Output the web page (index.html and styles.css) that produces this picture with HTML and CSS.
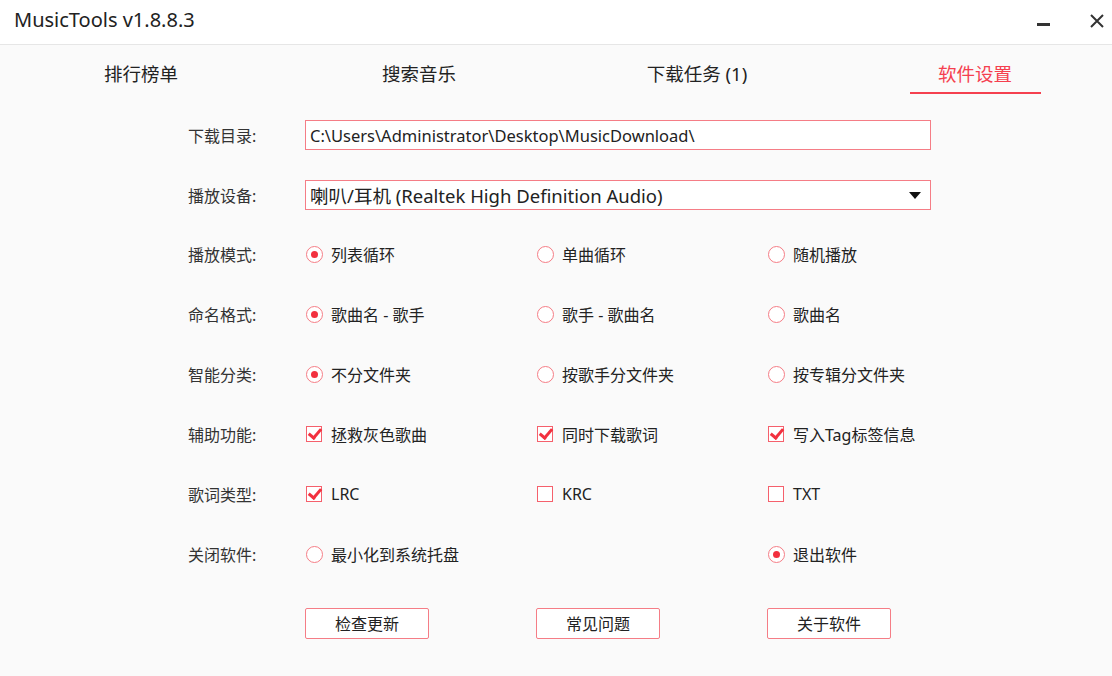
FILE: index.html
```html
<!DOCTYPE html>
<html lang="zh-CN">
<head>
  <meta charset="UTF-8" />
  <title>MusicTools v1.8.8.3</title>
  <link rel="stylesheet" href="styles.css">
</head>
<body>
  <!-- 标题栏 -->
  <div class="titlebar">
    <span class="app-title">MusicTools v1.8.8.3</span>
    <div class="win-btns">
      <span class="win-btn min"></span>
      <span class="win-btn close">
        <svg width="14" height="14" viewBox="0 0 14 14"><path d="M1 1L13 13M13 1L1 13" stroke="#333" stroke-width="2"/></svg>
      </span>
    </div>
  </div>

  <!-- 标签页 -->
  <div class="tabs">
    <div class="tab">排行榜单</div>
    <div class="tab">搜索音乐</div>
    <div class="tab">下载任务 (1)</div>
    <div class="tab active">软件设置</div>
  </div>

  <!-- 设置表单 -->
  <div class="form">
    <div class="row">
      <div class="label">下载目录:</div>
      <div class="field"><div class="input">C:\Users\Administrator\Desktop\MusicDownload\</div></div>
    </div>
    <div class="row">
      <div class="label">播放设备:</div>
      <div class="field">
        <div class="input select">喇叭/耳机 (Realtek High Definition Audio)<span class="arrow"></span></div>
      </div>
    </div>
    <div class="row">
      <div class="label">播放模式:</div>
      <div class="opts">
        <div class="opt"><span class="radio on"></span>列表循环</div>
        <div class="opt"><span class="radio"></span>单曲循环</div>
        <div class="opt"><span class="radio"></span>随机播放</div>
      </div>
    </div>
    <div class="row">
      <div class="label">命名格式:</div>
      <div class="opts">
        <div class="opt"><span class="radio on"></span>歌曲名 - 歌手</div>
        <div class="opt"><span class="radio"></span>歌手 - 歌曲名</div>
        <div class="opt"><span class="radio"></span>歌曲名</div>
      </div>
    </div>
    <div class="row">
      <div class="label">智能分类:</div>
      <div class="opts">
        <div class="opt"><span class="radio on"></span>不分文件夹</div>
        <div class="opt"><span class="radio"></span>按歌手分文件夹</div>
        <div class="opt"><span class="radio"></span>按专辑分文件夹</div>
      </div>
    </div>
    <div class="row">
      <div class="label">辅助功能:</div>
      <div class="opts">
        <div class="opt"><span class="check on"></span>拯救灰色歌曲</div>
        <div class="opt"><span class="check on"></span>同时下载歌词</div>
        <div class="opt"><span class="check on"></span>写入Tag标签信息</div>
      </div>
    </div>
    <div class="row">
      <div class="label">歌词类型:</div>
      <div class="opts">
        <div class="opt"><span class="check on"></span>LRC</div>
        <div class="opt"><span class="check"></span>KRC</div>
        <div class="opt"><span class="check"></span>TXT</div>
      </div>
    </div>
    <div class="row">
      <div class="label">关闭软件:</div>
      <div class="opts">
        <div class="opt"><span class="radio"></span>最小化到系统托盘</div>
        <div class="opt"></div>
        <div class="opt"><span class="radio on"></span>退出软件</div>
      </div>
    </div>
    <div class="row btn-row">
      <div class="label"></div>
      <div class="opts">
        <div class="opt"><button class="btn">检查更新</button></div>
        <div class="opt"><button class="btn">常见问题</button></div>
        <div class="opt"><button class="btn">关于软件</button></div>
      </div>
    </div>
  </div>
</body>
</html>
```

FILE: styles.css
```css
*{margin:0;padding:0;box-sizing:border-box}

body{
  width:1112px;height:676px;overflow:hidden;
  background:#fafafa;color:#333;
  font-family:"Noto Sans","Noto Sans CJK SC",sans-serif;
  font-size:16px
}

/* === 标题栏 === */
.titlebar{
  height:45px;background:#fff;border-bottom:1px solid #e6e6e6;
  display:flex;align-items:center;justify-content:space-between;
  padding-left:14px
}
.app-title{font-size:20px;color:#222;margin-top:-6px}
.win-btns{display:flex;align-items:center;height:100%;padding-right:8px}
.win-btn{display:flex;align-items:center;justify-content:center}
.win-btn.min{width:13px;height:3px;background:#333;margin-top:5px;margin-right:40px}
.win-btn.close{width:14px;height:14px;margin-top:-2px}

/* === 标签页 === */
.tabs{display:grid;grid-template-columns:repeat(4,1fr);height:50px}
.tab{
  display:flex;justify-content:center;align-items:center;
  font-size:18.5px;color:#222;position:relative;padding-top:5px;padding-left:4px
}
.tab.active{color:#f5404f}
.tab.active::after{
  content:"";position:absolute;bottom:1px;left:50%;
  width:131px;margin-left:-63px;height:2px;background:#f5404f
}

/* === 表单 === */
.form{padding:10px 0 0 188px}
.row{display:flex;align-items:center;height:60px}
.row:nth-child(2){height:59px}
.label{width:117px;color:#333}
.field{width:626px}
.input{
  height:30px;border:1px solid #f57d86;background:#fff;
  display:flex;align-items:center;padding-left:4px;
  font-size:16.5px;color:#222;position:relative
}
.input.select{font-size:18.5px}
.select .arrow{
  position:absolute;right:9px;top:11px;
  border-left:6px solid transparent;border-right:6px solid transparent;border-top:7px solid #111
}

.opts{display:flex}
.opt{width:231px;display:flex;align-items:center;color:#222;padding-left:1px}

.radio{
  width:17px;height:17px;border-radius:50%;border:1.5px solid #f57d86;
  margin-right:8px;display:flex;align-items:center;justify-content:center;background:#fff
}
.radio.on::after{content:"";width:7px;height:7px;border-radius:50%;background:#f2313f}

.check{
  width:16px;height:16px;border:1.5px solid #f5606c;margin-right:9px;
  background:#fff;position:relative
}
.check.on::after{
  content:"";position:absolute;left:4px;top:-1px;width:5px;height:10px;
  border-right:3px solid #f2313f;border-bottom:3px solid #f2313f;
  transform:rotate(40deg)
}

.btn-row{margin-top:9px}
.btn{
  width:124px;height:31px;border:1px solid #f57d86;background:#fff;border-radius:2px;
  font-family:inherit;font-size:16px;color:#222;margin-left:-1px
}
```
